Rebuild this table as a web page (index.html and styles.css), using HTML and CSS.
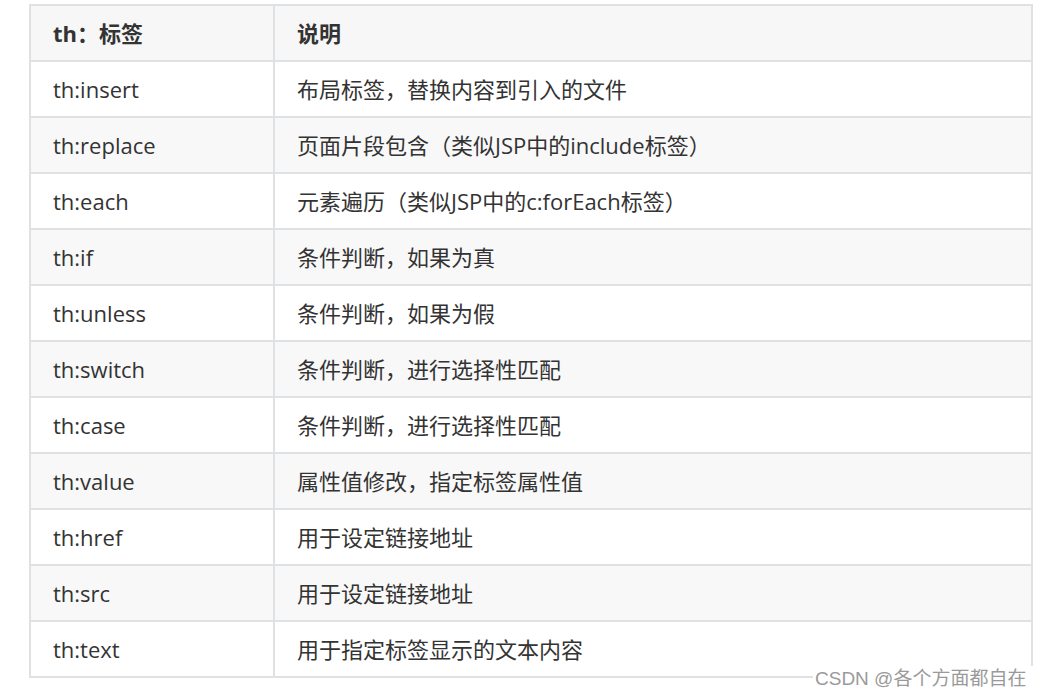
FILE: index.html
```html
<!DOCTYPE html>
<html lang="zh-CN">
<head>
<meta charset="utf-8">
<title>Thymeleaf 标签</title>
<link rel="stylesheet" href="styles.css">
</head>
<body>
<div class="page">
  <table class="tags">
    <thead>
      <tr><th class="col-tag">th：标签</th><th>说明</th></tr>
    </thead>
    <tbody>
      <tr><td>th:insert</td><td>布局标签，替换内容到引入的文件</td></tr>
      <tr><td>th:replace</td><td>页面片段包含（类似JSP中的include标签）</td></tr>
      <tr><td>th:each</td><td>元素遍历（类似JSP中的c:forEach标签）</td></tr>
      <tr><td>th:if</td><td>条件判断，如果为真</td></tr>
      <tr><td>th:unless</td><td>条件判断，如果为假</td></tr>
      <tr><td>th:switch</td><td>条件判断，进行选择性匹配</td></tr>
      <tr><td>th:case</td><td>条件判断，进行选择性匹配</td></tr>
      <tr><td>th:value</td><td>属性值修改，指定标签属性值</td></tr>
      <tr><td>th:href</td><td>用于设定链接地址</td></tr>
      <tr><td>th:src</td><td>用于设定链接地址</td></tr>
      <tr><td>th:text</td><td>用于指定标签显示的文本内容</td></tr>
    </tbody>
  </table>
  <div class="watermark">CSDN @各个方面都自在</div>
</div>
</body>
</html>
```
FILE: styles.css
```css
html, body {
  margin: 0;
  padding: 0;
  background: #ffffff;
}

.page {
  position: relative;
  width: 1043px;
  height: 698px;
  padding: 4px 0 0 29px;
  box-sizing: border-box;
  font-family: "Open Sans", "Noto Sans CJK SC", sans-serif;
  color: #333333;
}

.tags {
  border-collapse: collapse;
  width: 1004px;
  font-size: 22px;
}

.tags th,
.tags td {
  border: 2px solid #dfe2e5;
  height: 54px;
  padding: 0 22px;
  text-align: left;
  vertical-align: middle;
  line-height: 30px;
}

.tags th {
  font-weight: 700;
  background: #f7f7f7;
}

.tags .col-tag {
  width: 198px;
}

.tags tbody tr:nth-child(even) td {
  background: #f8f8f8;
}

.watermark {
  position: absolute;
  left: 813px;
  top: 666px;
  width: 221px;
  height: 32px;
  background: #ffffff;
  color: #9a9a9a;
  font-family: "Liberation Sans", "Noto Sans CJK SC", sans-serif;
  font-size: 19px;
  line-height: 26px;
  padding: 0 0 0 2px;
  box-sizing: border-box;
  white-space: nowrap;
}
```
